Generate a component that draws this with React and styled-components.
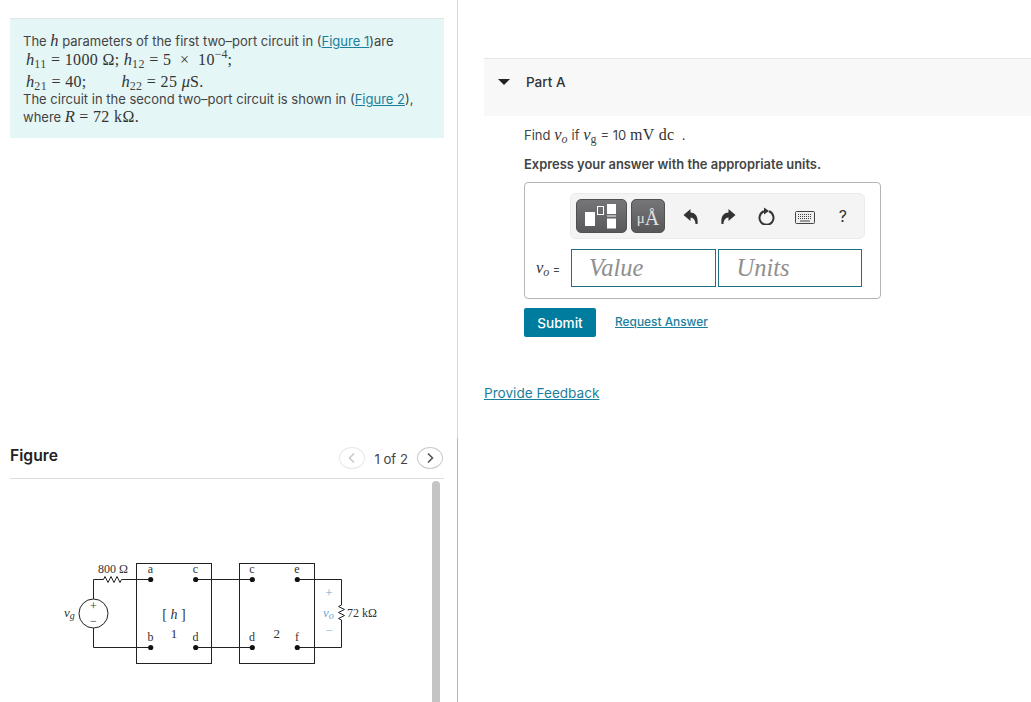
import React from 'react'
import styled, { createGlobalStyle } from 'styled-components'

const GlobalStyle = createGlobalStyle`
  html, body { margin: 0; padding: 0; background: #fff; overflow: hidden; }
  body { font-family: "Inter", "Liberation Sans", sans-serif; color: #333; }
`

const Page = styled.div`
  display: grid;
  grid-template-columns: 458px 1fr;
  width: 1031px;
  height: 702px;
  overflow: hidden;
`

const LeftPane = styled.div`
  display: flex;
  flex-direction: column;
  height: 702px;
  padding: 18px 13px 0 10px;
  box-sizing: border-box;
  border-right: 1px solid #d8d8d8;
  position: relative;
  &::after {
    content: '';
    position: absolute;
    right: -1px;
    top: 438px;
    bottom: 0;
    width: 1px;
    background: #a9bdd0;
  }
`

const Intro = styled.div`
  flex: none;
  height: 120px;
  box-sizing: border-box;
  background: #e4f6f5;
  border-top: 1px solid #dfe6e6;
  padding: 12px 13px 0;
  font-size: 13px;
  color: #444;
`

const Line = styled.div`
  white-space: pre;
  box-sizing: border-box;
  height: ${p => p.$h || 17}px;
  line-height: ${p => (p.$h || 17) - (p.$top || 0)}px;
  padding-top: ${p => p.$top || 0}px;
  padding-left: ${p => (p.$math ? '3px' : '0')};
`

const Math = styled.span`
  font-family: "Liberation Serif", serif;
  font-size: 16px;
  letter-spacing: 0.35px;
  color: #333;
`

const Var = styled.i`
  font-family: "Liberation Serif", serif;
  font-size: 16.5px;
  color: #333;
`

const Sub = styled.sub`
  font-family: "Liberation Serif", serif;
  font-size: 12px;
  letter-spacing: 0.4px;
  line-height: 0;
  vertical-align: -3px;
`

const Sup = styled.sup`
  font-family: "Liberation Serif", serif;
  font-size: 12px;
  line-height: 0;
  vertical-align: 7px;
`

const Link = styled.a`
  color: #1a7f9c;
  text-decoration: underline;
  cursor: pointer;
`

const FigureHeader = styled.div`
  flex: none;
  display: flex;
  align-items: center;
  justify-content: space-between;
  box-sizing: border-box;
  height: 42px;
  margin-top: 299px;
  border-bottom: 1px solid #dcdcdc;
`

const FigureTitle = styled.h2`
  margin: 0 0 5px;
  font-size: 15.7px;
  font-weight: 600;
  color: #222;
`

const Pager = styled.div`
  display: flex;
  align-items: center;
  gap: 10px;
  margin: 0 1px 0 0;
  font-size: 13.2px;
  color: #444;
`

const PagerLabel = styled.span`
  margin: 2px -1px 0 -1px;
`

const PagerButton = styled.button`
  width: 26px;
  height: 22px;
  padding: 0;
  display: flex;
  align-items: center;
  justify-content: center;
  background: #fff;
  border: 1px solid ${p => (p.disabled ? '#e8e8e8' : '#c9c9c9')};
  border-radius: 50%;
  color: ${p => (p.disabled ? '#c8c8c8' : '#555')};
`

const FigureBody = styled.div`
  display: flex;
  flex: 1;
  justify-content: space-between;
  padding-top: 2px;
`

const Circuit = styled.svg`
  margin: 79px 0 0 50px;
  width: 330px;
  height: 108px;
  flex: none;
`

const Scrollbar = styled.div`
  width: 8px;
  height: 240px;
  margin-right: 4px;
  background: #c4c4c4;
  border-radius: 4px 4px 0 0;
`

const RightPane = styled.div`
  padding: 58px 0 0 26px;
`

const PartHeader = styled.div`
  display: flex;
  align-items: center;
  height: 58px;
  box-sizing: border-box;
  background: #f8f8f8;
  border-top: 1px solid #e6e6e6;
  padding-bottom: 11px;
  font-size: 13.5px;
  font-weight: 500;
  color: #333;
`

const Caret = styled.span`
  width: 0;
  height: 0;
  margin: 0 16px 0 14px;
  border-left: 6px solid transparent;
  border-right: 6px solid transparent;
  border-top: 6px solid #222;
`

const PartBody = styled.div`
  padding: 10px 0 0 40px;
`

const Question = styled.p`
  margin: 0;
  height: 19px;
  font-size: 13px;
  line-height: 18px;
  color: #444;
  white-space: pre;
`

const Instruction = styled.p`
  margin: 10px 0 0;
  font-size: 12.9px;
  line-height: 19px;
  font-weight: 600;
  color: #444;
`

const AnswerBox = styled.div`
  width: 357px;
  height: 117px;
  margin-top: 8px;
  box-sizing: border-box;
  border: 1px solid #b5b5b5;
  border-radius: 4px;
  padding: 10px 16px 0 11px;
`

const Toolbar = styled.div`
  display: flex;
  align-items: center;
  width: 295px;
  height: 46px;
  margin-left: 34px;
  box-sizing: border-box;
  padding-left: 5px;
  background: #f4f4f4;
  border: 1px solid #ebebeb;
  border-radius: 6px;
`

const TemplateButton = styled.div`
  display: flex;
  align-items: flex-end;
  justify-content: center;
  width: ${p => p.$w}px;
  height: 34px;
  margin-right: 4px;
  box-sizing: border-box;
  background: linear-gradient(#767678, #58585a);
  border: 1px solid #505052;
  border-radius: 5px;
  color: #e4e4e4;
  font-family: "Liberation Serif", serif;
  line-height: 27px;
`

const Mu = styled.span`
  font-size: 15px;
`

const Angstrom = styled.span`
  font-size: 20px;
`

const ToolIcon = styled.div`
  display: flex;
  align-items: center;
  justify-content: center;
  width: 38.2px;
  height: 33px;
  margin-left: ${p => (p.$first ? '2px' : '0')};
  padding-top: ${p => (p.$low ? '2px' : '0')};
  box-sizing: border-box;
  color: #333;
  font-size: 16px;
`

const InputRow = styled.div`
  display: flex;
  align-items: center;
  margin-top: 10px;
`

const InputLabel = styled.span`
  width: 35px;
  flex: none;
  font-size: 11px;
  color: #444;
`

const Field = styled.div`
  width: 145px;
  height: 38px;
  margin-right: 2px;
  box-sizing: border-box;
  border: 1px solid #1f6f85;
  padding-left: ${p => p.$pad}px;
  font-family: "Liberation Serif", serif;
  font-style: italic;
  font-size: 24.5px;
  line-height: 36px;
  color: #8f8f8f;
`

const Actions = styled.div`
  display: flex;
  align-items: center;
  margin-top: 9px;
`

const SubmitButton = styled.button`
  width: 72px;
  height: 29px;
  padding: 0;
  background: #007c9e;
  border: none;
  border-radius: 2px;
  color: #fff;
  font: 500 13.6px "Inter", "Liberation Sans", sans-serif;
`

const RequestLink = styled(Link)`
  margin: 0 0 2px 19px;
  font-size: 11.9px;
  font-weight: 500;
`

const Feedback = styled(Link)`
  display: block;
  margin-top: 47px;
  font-size: 13.6px;
  line-height: 18px;
`

const Label = styled.text`
  font-family: "Liberation Serif", serif;
  font-size: ${p => p.$size || 12}px;
  fill: ${p => p.$fill || '#333'};
  font-style: ${p => (p.$italic ? 'italic' : 'normal')};
  text-anchor: ${p => p.$anchor || 'middle'};
`

const nodes = [90.7, 135.7, 192.3, 237.3].flatMap(x => [[x, 19.5], [x, 87.5]])

const CircuitDiagram = () => (
  <Circuit viewBox="0 0 330 108">
    <g fill="none" stroke="#222" strokeWidth="1">
      <rect x="76.5" y="3.5" width="75" height="100" />
      <rect x="179.5" y="3.5" width="75" height="100" />
      <path d="M33.500 39V19.500H43.500l1.500-3 3 6 3-6 3 6 3-6 3 6 1.500-3H90.700M135.700 19.500H192.300M237.300 19.500H281.500V45l-3 1.500 6 3-6 3 6 3-6 3 3 1.500V87.500H237.300M192.300 87.500H135.700M90.700 87.500H33.500V68" />
      <circle cx="33.500" cy="53.500" r="14.500" />
    </g>
    {nodes.map(([x, y]) => <circle key={`${x}-${y}`} cx={x} cy={y} r="2.600" fill="#111" />)}
    <Label x="53" y="12.500">800 Ω</Label>
    <Label x="90.500" y="12.500">a</Label>
    <Label x="135.500" y="12.500">c</Label>
    <Label x="192" y="12.500">c</Label>
    <Label x="237" y="12.500">e</Label>
    <Label x="90.500" y="80.500">b</Label>
    <Label x="135.500" y="80.500">d</Label>
    <Label x="192" y="80.500">d</Label>
    <Label x="237" y="80.500">f</Label>
    <Label x="114" y="59" $size={14} style={{ whiteSpace: 'pre' }}>[ <tspan fontStyle="italic">h</tspan> ]</Label>
    <Label x="114" y="78" $size={13}>1</Label>
    <Label x="216.700" y="78" $size={13}>2</Label>
    <Label x="4" y="57" $anchor="start" $size={13} $italic>v<tspan fontSize="10" dy="2">g</tspan></Label>
    <Label x="33.500" y="49.500" $size={12}>+</Label>
    <Label x="33.500" y="65" $size={12}>−</Label>
    <Label x="269" y="37" $size={13} $fill="#69a9cf">+</Label>
    <Label x="269" y="75" $size={13} $fill="#8fbcd8">−</Label>
    <Label x="263" y="57" $anchor="start" $size={13} $fill="#69a9cf" $italic>v<tspan fontSize="10" dy="2">o</tspan></Label>
    <Label x="287" y="57" $anchor="start">72 kΩ</Label>
  </Circuit>
)

const Chevron = ({ dir }) => (
  <svg width="12" height="12" viewBox="0 0 12 12" fill="none" stroke="currentColor" strokeWidth="1.600">
    <path d={dir === 'left' ? 'M8 1.500 3.500 6 8 10.500' : 'M4 1.500 8.500 6 4 10.500'} />
  </svg>
)

const TemplateIcon = () => (
  <svg width="36" height="27" viewBox="0 0 36 27" style={{ marginBottom: 2 }}>
    <rect x="1" y="9" width="10" height="14" fill="#fff" />
    <rect x="13.500" y="3.500" width="6" height="8" fill="none" stroke="#fff" />
    <rect x="23" y="1" width="9" height="10" fill="#fff" />
    <rect x="23" y="12.500" width="9" height="1" fill="#fff" />
    <rect x="23" y="15.500" width="9" height="10" fill="#fff" />
  </svg>
)

const UndoIcon = ({ flip }) => (
  <svg width="15" height="17" viewBox="0 0 15 17" style={flip ? { transform: 'scaleX(-1)' } : undefined}>
    <path d="M.5 7 7.500 1v3.500c4.500 0 8 3.500 7 11.500h-2c0-3.500-2-6.500-5-6.500V13z" fill="#333" />
  </svg>
)

const ResetIcon = () => (
  <svg width="17" height="18" viewBox="0 0 17 18" fill="none">
    <path d="M6 4.300a7 7 0 1 0 5 0" stroke="#333" strokeWidth="2" />
    <path d="M6 .5 11 4 6 7.500z" fill="#333" />
  </svg>
)

const KeyboardIcon = () => (
  <svg width="20" height="13" viewBox="0 0 20 13">
    <rect x=".5" y=".5" width="19" height="12" rx="1" fill="#eee" stroke="#444" />
    <path d="M3 3.500h14M3 5.500h14M3 7.500h14" stroke="#444" strokeDasharray="1 1" />
    <path d="M5 10h10" stroke="#444" />
  </svg>
)

export default function App() {
  return (
    <Page>
      <GlobalStyle />
      <LeftPane>
        <Intro>
          <Line $h={19}>The <Var>h</Var> parameters of the first two–port circuit in (<Link>Figure 1</Link>)are</Line>
          <Line $h={20} $math><Var>h</Var><Sub>11</Sub><Math> = 1000 Ω; </Math><Var>h</Var><Sub>12</Sub><Math> = 5  ×  10</Math><Sup>−4</Sup><Math>;</Math></Line>
          <Line $h={21} $top={3} $math><Var>h</Var><Sub>21</Sub><Math> = 40;        </Math><Var>h</Var><Sub>22</Sub><Math> = 25 </Math><Var>μ</Var><Math>S.</Math></Line>
          <Line>The circuit in the second two–port circuit is shown in (<Link>Figure 2</Link>),</Line>
          <Line>where <Var>R</Var><Math> = 72 kΩ.</Math></Line>
        </Intro>
        <FigureHeader>
          <FigureTitle>Figure</FigureTitle>
          <Pager>
            <PagerButton disabled><Chevron dir="left" /></PagerButton>
            <PagerLabel>1 of 2</PagerLabel>
            <PagerButton><Chevron dir="right" /></PagerButton>
          </Pager>
        </FigureHeader>
        <FigureBody>
          <CircuitDiagram />
          <Scrollbar />
        </FigureBody>
      </LeftPane>
      <RightPane>
        <PartHeader><Caret />Part A</PartHeader>
        <PartBody>
          <Question>Find <Var>v</Var><Sub><i>o</i></Sub> if <Var>v</Var><Sub>g</Sub> = 10 <Math>mV dc</Math>  .</Question>
          <Instruction>Express your answer with the appropriate units.</Instruction>
          <AnswerBox>
            <Toolbar>
              <TemplateButton $w={51}><TemplateIcon /></TemplateButton>
              <TemplateButton $w={34}><Mu>μ</Mu><Angstrom>Å</Angstrom></TemplateButton>
              <ToolIcon $first><UndoIcon /></ToolIcon>
              <ToolIcon><UndoIcon flip /></ToolIcon>
              <ToolIcon><ResetIcon /></ToolIcon>
              <ToolIcon $low><KeyboardIcon /></ToolIcon>
              <ToolIcon>?</ToolIcon>
            </Toolbar>
            <InputRow>
              <InputLabel><Var>v</Var><Sub><i>o</i></Sub> =</InputLabel>
              <Field $pad={17}>Value</Field>
              <Field $pad={18}>Units</Field>
            </InputRow>
          </AnswerBox>
          <Actions>
            <SubmitButton>Submit</SubmitButton>
            <RequestLink>Request Answer</RequestLink>
          </Actions>
        </PartBody>
        <Feedback>Provide Feedback</Feedback>
      </RightPane>
    </Page>
  )
}
